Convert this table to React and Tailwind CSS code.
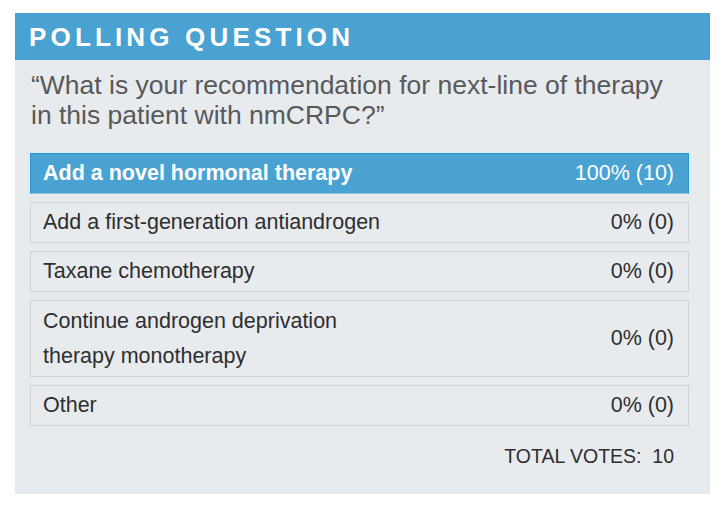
const options = [
    { label: 'Add a novel hormonal therapy', result: '100% (10)', top: true },
    { label: 'Add a first-generation antiandrogen', result: '0% (0)' },
    { label: 'Taxane chemotherapy', result: '0% (0)' },
    { label: ['Continue androgen deprivation', 'therapy monotherapy'], result: '0% (0)' },
    { label: 'Other', result: '0% (0)' }
];

const OptionRow = ({ option }) => {
    const multi = Array.isArray(option.label);

    if (option.top) {
        return (
            <div className="h-[41px] flex items-center justify-between pl-[12px] pr-[14px] bg-[#4aa2d3] border border-[#1f9ad6] border-b-[#8ec4e4] text-white">
                <span className="font-bold">{option.label}</span>
                <span>{option.result}</span>
            </div>
        );
    }

    return (
        <div
            className={`flex items-center justify-between pl-[12px] pr-[14px] border border-[#cfd3d6] text-[#2e2e2e] ${multi ? 'h-[77px]' : 'h-[41px]'}`}
        >
            {multi ? (
                <div className="leading-[35px]">
                    {option.label.map(line => (
                        <div key={line}>{line}</div>
                    ))}
                </div>
            ) : (
                <span>{option.label}</span>
            )}
            <span>{option.result}</span>
        </div>
    );
};

const App = () => {
    return (
        <div className="w-[724px] h-[508px] bg-white pt-[13px] pl-[15px] font-['Liberation_Sans',Arial,sans-serif]">
            <div className="w-[695px] h-[481px] bg-[#e7ebee] flex flex-col">
                <div className="h-[47px] bg-[#4aa2d3] flex items-center pl-[14px]">
                    <h1 className="text-white font-bold text-[26px] tracking-[0.16em] leading-none">
                        POLLING QUESTION
                    </h1>
                </div>

                <div className="pl-[15px] pr-[21px]">
                    <p className="pt-[10px] pl-[1px] text-[26.5px] leading-[30px] text-[#58595b]">
                        “What is your recommendation for next-line of therapy
                        <br />
                        in this patient with nmCRPC?”
                    </p>

                    <div className="mt-[23px] flex flex-col gap-2 text-[21.5px]">
                        {options.map((option, i) => (
                            <OptionRow key={i} option={option} />
                        ))}
                    </div>

                    <div className="mt-[18px] pr-[15px] text-right text-[19.5px] leading-[24px] text-[#2e2e2e] whitespace-pre">
                        TOTAL VOTES:  10
                    </div>
                </div>
            </div>
        </div>
    );
};

export default App;
